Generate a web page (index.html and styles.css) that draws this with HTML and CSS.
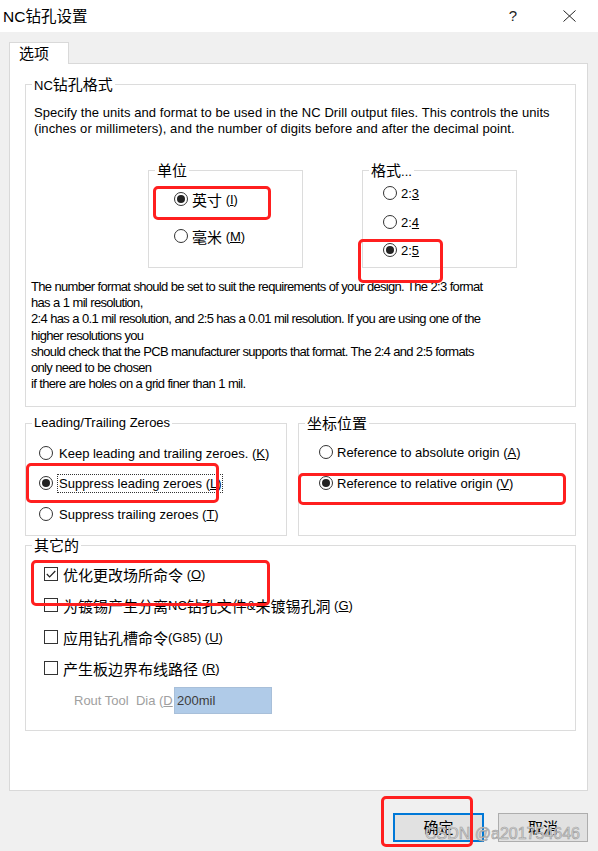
FILE: index.html
```html
<!DOCTYPE html>
<html>
<head>
<meta charset="utf-8">
<link rel="stylesheet" href="styles.css">
</head>
<body>
<div class="titlebar">
  <span class="title">NC<span class="cjt">钻孔设置</span></span>
  <span class="tb-btns">
    <span class="help">?</span>
    <svg class="close" viewBox="0 0 13 12"><path d="M0.5 0.5 L12.5 11.5 M12.5 0.5 L0.5 11.5" stroke="#222" stroke-width="1" fill="none"/></svg>
  </span>
</div>
<div class="window">
  <div class="tab"><span class="cj">选项</span></div>
  <div class="panel">
    <fieldset class="grp ncgrp">
      <legend>NC<span class="cj">钻孔格式</span></legend>
      <p class="desc">Specify the units and format to be used in the NC Drill output files. This controls the units<br>(inches or millimeters), and the number of digits before and after the decimal point.</p>
      <div class="subrow">
        <fieldset class="grp sub units">
          <legend><span class="cj">单位</span></legend>
          <div class="opt u1"><span class="radio on"></span><span class="cj">英寸</span>&nbsp;(<u>I</u>)</div>
          <div class="opt u2"><span class="radio"></span><span class="cj">毫米</span>&nbsp;(<u>M</u>)</div>
        </fieldset>
        <fieldset class="grp sub fmt">
          <legend><span class="cj">格式</span>...</legend>
          <div class="opt f1"><span class="radio"></span>2:<u>3</u></div>
          <div class="opt f2"><span class="radio"></span>2:<u>4</u></div>
          <div class="opt f3"><span class="radio on"></span>2:<u>5</u></div>
        </fieldset>
      </div>
      <p class="note">The number format should be set to suit the requirements of your design. The 2:3 format<br>has a 1 mil resolution,<br>2:4 has a 0.1 mil resolution, and 2:5 has a 0.01 mil resolution. If you are using one of the<br>higher resolutions you<br>should check that the PCB manufacturer supports that format. The 2:4 and 2:5 formats<br>only need to be chosen<br>if there are holes on a grid finer than 1 mil.</p>
    </fieldset>
    <div class="row2">
      <fieldset class="grp lead">
        <legend>Leading/Trailing Zeroes</legend>
        <div class="opt l1"><span class="radio"></span>Keep leading and trailing zeroes. (<u>K</u>)</div>
        <div class="opt l2"><span class="radio on"></span><span class="focus">Suppress leading zeroes (<u>L</u>)</span></div>
        <div class="opt l3"><span class="radio"></span>Suppress trailing zeroes (<u>T</u>)</div>
      </fieldset>
      <fieldset class="grp coord">
        <legend><span class="cj">坐标位置</span></legend>
        <div class="opt c1"><span class="radio"></span>Reference to absolute origin (<u>A</u>)</div>
        <div class="opt c2"><span class="radio on"></span>Reference to relative origin (<u>V</u>)</div>
      </fieldset>
    </div>
    <fieldset class="grp other">
      <legend><span class="cj">其它的</span></legend>
      <div class="opt k1"><span class="chk"><svg viewBox="0 0 12 12" width="12" height="12"><path d="M1.8 6 L4.6 8.8 L10.3 3" stroke="#222" stroke-width="1.2" fill="none"/></svg></span><span class="cj">优化更改场所命令</span>&nbsp;(<u>O</u>)</div>
      <div class="opt k2"><span class="chk"></span><span class="cj">为镀锡产生分离</span><span class="ncs">NC</span><span class="cj">钻孔文件</span>&amp;<span class="cj">未镀锡孔洞</span>&nbsp;(<u>G</u>)</div>
      <div class="opt k3"><span class="chk"></span><span class="cj">应用钻孔槽命令</span>(G85) (<u>U</u>)</div>
      <div class="opt k4"><span class="chk"></span><span class="cj">产生板边界布线路径</span>&nbsp;(<u>R</u>)</div>
      <div class="rout"><span class="rlabel">Rout Tool&nbsp; Dia (<u>D</u></span><span class="inp">200mil</span></div>
    </fieldset>
  </div>
  <div class="buttons">
    <button class="btn ok"><span class="cj">确定</span></button>
    <button class="btn"><span class="cj">取消</span></button>
  </div>
</div>
<div class="mark m1"></div>
<div class="mark m2"></div>
<div class="mark m3"></div>
<div class="mark m4"></div>
<div class="mark m5"></div>
<div class="mark m6"></div>
<div class="watermark">CSDN @a201754646</div>
</body>
</html>
```

FILE: styles.css
```css
* { box-sizing: border-box; }
html, body { margin: 0; padding: 0; }
body {
  width: 598px;
  height: 851px;
  background: #f0f0f0;
  font-family: "Liberation Sans", "Noto Sans CJK SC", sans-serif;
  font-size: 13px;
  color: #000;
  position: relative;
  overflow: hidden;
}
.cj { font-family: "Noto Sans CJK SC", sans-serif; font-size: 15px; }
.cjt { font-family: "Noto Sans CJK SC", sans-serif; font-size: 15.5px; }
u { text-decoration: underline; text-underline-offset: 1px; }

.titlebar {
  height: 32px;
  background: #fff;
  display: flex;
  align-items: center;
  justify-content: space-between;
  padding: 0 22px 0 3px;
  line-height: 20px;
}
.title { font-size: 15.5px; }
.tb-btns { display: flex; align-items: center; gap: 46px; }
.help { font-size: 15px; color: #222; }
.close { width: 13px; height: 12px; display: block; }

.window { padding: 10px 10px 0 9px; }
.tab {
  width: 60px;
  height: 22px;
  background: #fff;
  border: 1px solid #d9d9d9;
  border-bottom: none;
  position: relative;
  z-index: 1;
  margin-bottom: -1px;
  padding-left: 9px;
  line-height: 20px;
}
.panel {
  height: 728px;
  background: #fff;
  border: 1px solid #d9d9d9;
  padding: 11px 0 0 15px;
}

fieldset.grp {
  margin: 0;
  border: 1px solid #dcdcdc;
  padding: 0;
  min-width: 0;
}
.grp > legend {
  line-height: 18px;
  height: 18px;
  padding: 0 2px;
  margin-left: 6px;
  white-space: nowrap;
}
.ncgrp { width: 551px; height: 332px; }
.desc { margin: 12px 0 0 8px; line-height: 16px; white-space: nowrap; letter-spacing: 0.07px; }
.subrow { display: flex; margin-top: 24px; }
.sub { width: 155px; height: 107px; }
.units { margin-left: 122px !important; }
.fmt { margin-left: 59px !important; }
.note {
  margin: 11px 0 0 5px;
  line-height: 16.2px;
  white-space: nowrap;
  font-size: 13px;
  letter-spacing: -0.7px;
  word-spacing: 0.3px;
}

.opt { display: flex; align-items: center; height: 20px; white-space: nowrap; }
.radio {
  width: 14px;
  height: 14px;
  border: 1px solid #333;
  border-radius: 50%;
  margin-right: 4px;
  flex: none;
  display: flex;
  align-items: center;
  justify-content: center;
  background: #fff;
}
.radio.on::after {
  content: "";
  width: 8px;
  height: 8px;
  border-radius: 50%;
  background: #222;
}
.u1 { margin: 10px 0 0 25px; }
.u2 { margin: 17px 0 0 25px; }
.f1 { margin: 4px 0 0 20px; }
.f2 { margin: 9px 0 0 20px; }
.f3 { margin: 8px 0 0 20px; }

.row2 { display: flex; gap: 11px; margin-top: 7px; }
.lead { width: 262px; height: 122px; }
.coord { width: 278px; height: 122px; }
.l1 { margin: 11px 0 0 13px; }
.l2 { margin: 10px 0 0 13px; }
.l3 { margin: 11px 0 0 13px; }
.lead .radio { margin-right: 6px; }
.focus {
  display: inline-block;
  width: 166px;
  height: 19px;
  line-height: 17px;
  border: 1px dotted #333;
  margin-left: -2px;
  padding-left: 1px;
  overflow: hidden;
}
.c1 { margin: 10px 0 0 20px; }
.c2 { margin: 11px 0 0 20px; }

.other { width: 551px; height: 195px; margin-top: 8px; }
.chk {
  width: 14px;
  height: 14px;
  border: 1px solid #333;
  margin-right: 5px;
  flex: none;
  background: #fff;
}
.chk svg { display: block; }
.k1 { margin: 10px 0 0 18px; }
.k2 { margin: 11px 0 0 18px; }
.k3 { margin: 12px 0 0 18px; }
.k4 { margin: 11px 0 0 18px; }
.ncs { font-size: 13px; }
.rout { display: flex; align-items: center; height: 27px; margin: 9px 0 0 48px; }
.rlabel { width: 100px; white-space: nowrap; color: #a0a0a0; }
.inp {
  width: 98px;
  height: 27px;
  background: #b0cbe8;
  border: 1px solid #a8bfd9;
  color: #3c3c3c;
  padding-left: 2px;
  line-height: 25px;
}

.buttons { display: flex; justify-content: flex-end; gap: 14px; margin-top: 22px; }
.btn {
  width: 90px;
  height: 29px;
  background: #e1e1e1;
  border: 1px solid #adadad;
  padding: 0;
  font: inherit;
  color: #000;
  line-height: 20px;
}
.btn.ok { width: 91px; border: 2px solid #0078d7; }

.mark {
  position: absolute;
  border: 3px solid #ff1f1f;
  border-radius: 5px;
}
.m1 { left: 153px; top: 186px; width: 118px; height: 34px; }
.m2 { left: 358px; top: 239px; width: 85px; height: 44px; }
.m3 { left: 26px; top: 463px; width: 193px; height: 40px; }
.m4 { left: 298px; top: 473px; width: 268px; height: 32px; }
.m5 { left: 31px; top: 560px; width: 239px; height: 46px; }
.m6 { left: 381px; top: 796px; width: 92px; height: 51px; }

.watermark {
  position: absolute;
  left: 425px;
  top: 825px;
  font-size: 16px;
  line-height: 18px;
  color: #d6d6d6;
  -webkit-text-stroke: 0.6px #9c9c9c;
  white-space: nowrap;
}
```
